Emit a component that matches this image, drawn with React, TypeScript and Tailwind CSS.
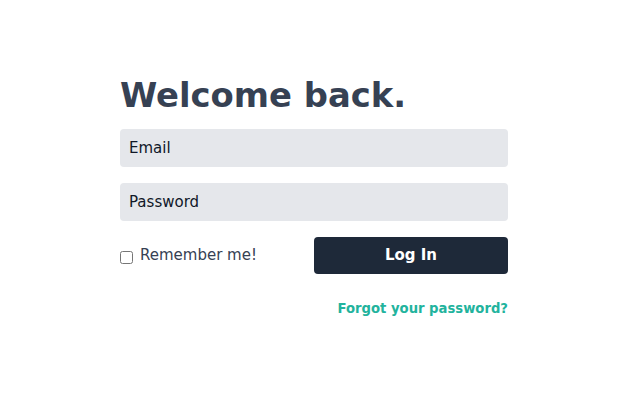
import React from 'react';

export default function App() {
  return (
    <div className="min-h-screen bg-white font-['DejaVu_Sans',sans-serif] pl-[120px]">
      <form className="w-[388px] pt-[76px]" onSubmit={(e) => e.preventDefault()}>
        <h1 className="text-[33.8px] leading-[40px] font-bold text-gray-700 mb-[13px]">Welcome back.</h1>
        <input
          type="email"
          placeholder="Email"
          className="block w-full h-[38px] bg-gray-200 rounded px-[9px] text-[15px] text-gray-900 placeholder:text-gray-900 outline-none mb-[16px]"
        />
        <input
          type="password"
          placeholder="Password"
          className="block w-full h-[38px] bg-gray-200 rounded px-[9px] text-[15px] text-gray-900 placeholder:text-gray-900 outline-none mb-[16px]"
        />
        <div className="flex items-center">
          <label className="w-1/2 flex items-center gap-[7px] text-[15px] text-gray-700">
            <input type="checkbox" className="w-[13px] h-[13px] mt-[3px]" />
            Remember me!
          </label>
          <button
            type="submit"
            className="w-1/2 h-[37px] bg-gray-800 text-white font-bold text-[15px] rounded"
          >
            Log In
          </button>
        </div>
        <div className="flex justify-end mt-[28px]">
          <a href="#" className="text-[13.2px] font-bold text-[#22b39d] leading-none">
            Forgot your password?
          </a>
        </div>
      </form>
    </div>
  );
}
